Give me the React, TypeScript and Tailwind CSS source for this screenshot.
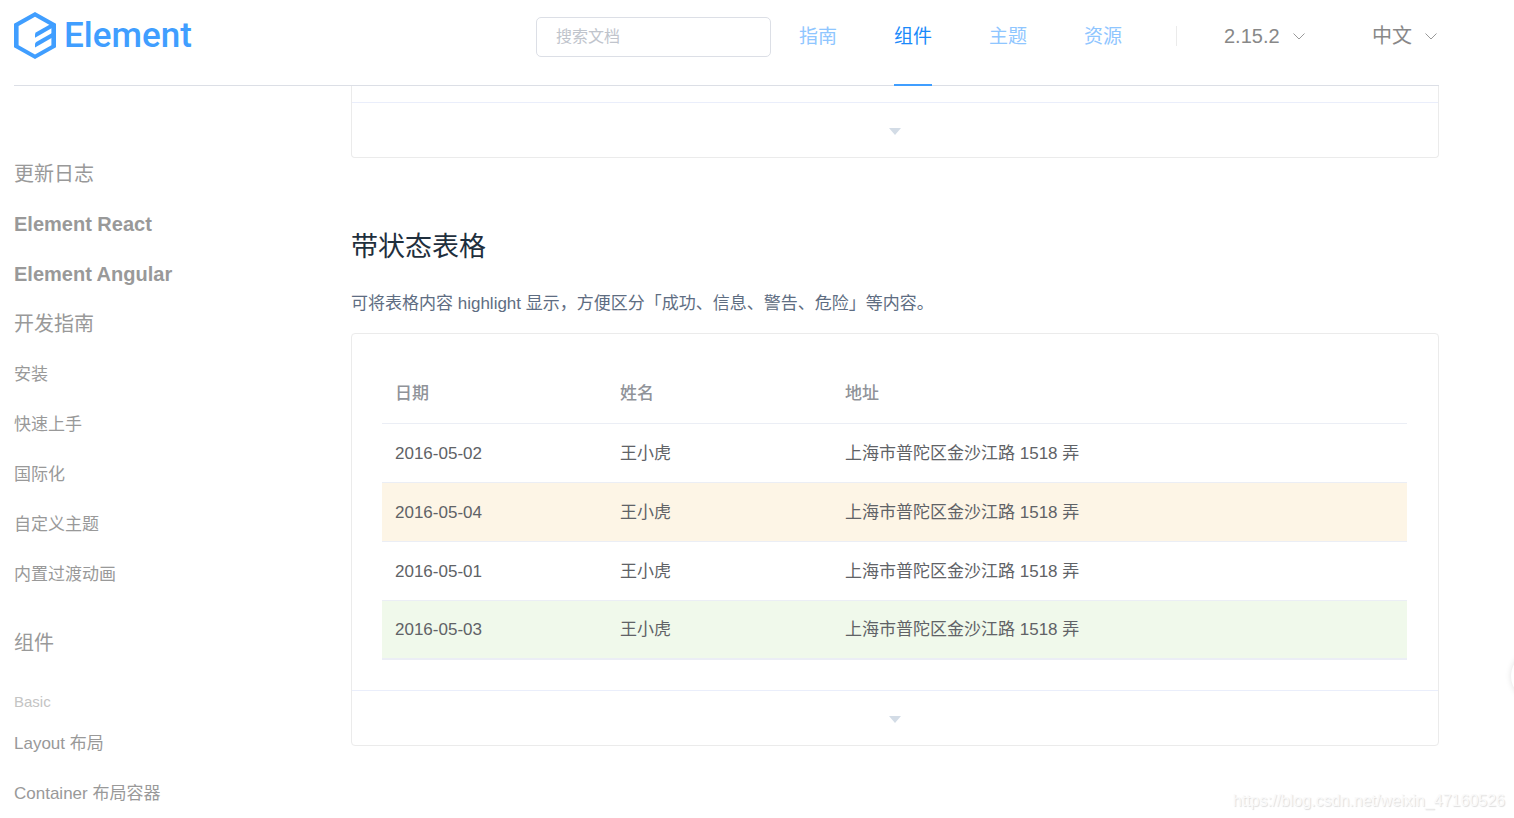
const navItems = [
  { label: "指南", active: false },
  { label: "组件", active: true },
  { label: "主题", active: false },
  { label: "资源", active: false },
];

const guideItems = ["安装", "快速上手", "国际化", "自定义主题", "内置过渡动画"];
const basicItems = ["Layout 布局", "Container 布局容器"];

const address = "上海市普陀区金沙江路 1518 弄";
const rows = [
  { date: "2016-05-02", name: "王小虎", address, tone: "" },
  { date: "2016-05-04", name: "王小虎", address, tone: "bg-[#fdf5e6]" },
  { date: "2016-05-01", name: "王小虎", address, tone: "" },
  { date: "2016-05-03", name: "王小虎", address, tone: "bg-[#f0f9eb]" },
];

const Logo = () => (
  <a href="#" className="flex items-center gap-2 text-[#409eff]">
    <svg viewBox="0 0 42 47" className="h-[47px] w-[42px]" fill="currentColor">
      <path
        fillRule="evenodd"
        d="M21 0L42 11.7V35.3L21 47L0 35.3V11.7ZM21 4.8L4.6 14V33.2L21 42.4L37.4 33.2V14Z"
      />
      <path d="M21 25.8V22.4Q21 21 22.2 20.3L38 11.2V16Z" />
      <path d="M21 35.6V32.2Q21 30.8 22.2 30.1L38 21V25.8Z" />
    </svg>
    <span className="font-[Roboto,sans-serif] text-[35px] leading-[47px] font-medium">
      Element
    </span>
  </a>
);

const HeaderSelect = ({ label, value }: { label: string; value: string }) => (
  <label className="relative flex items-center">
    <select
      aria-label={label}
      className="appearance-none bg-transparent pr-[25px] text-[20px] leading-[28px] text-[#888]"
    >
      <option>{value}</option>
    </select>
    <svg
      viewBox="0 0 12 7"
      className="pointer-events-none absolute right-0 h-[7px] w-3"
      fill="none"
      stroke="#999"
    >
      <path d="M0.5 0.5L6 6L11.5 0.5" />
    </svg>
  </label>
);

const Header = () => (
  <header className="flex h-[86px] items-start justify-between border-b border-[#dcdfe6] pt-3 pr-[2px]">
    <Logo />
    <div className="flex items-start">
      <input
        type="text"
        aria-label="搜索文档"
        placeholder="搜索文档"
        className="mt-[5px] h-10 w-[235px] rounded-[5px] border border-[#dcdfe6] px-[19px] text-[16px] placeholder:text-[#c0c4cc]"
      />
      <nav className="ml-7 flex gap-[57px]">
        {navItems.map((item) => (
          <a
            key={item.label}
            href="#"
            className={`h-[74px] text-[19px] leading-[50px] ${
              item.active
                ? "border-b-2 border-[#409eff] text-[#1989fa]"
                : "text-[#8fc6ff]"
            }`}
          >
            {item.label}
          </a>
        ))}
      </nav>
      <div className="ml-[54px] flex h-12 items-center">
        <div className="mr-[47px] h-5 w-px bg-[#ebebeb]" />
        <HeaderSelect label="版本" value="2.15.2" />
        <div className="w-[67px]" />
        <HeaderSelect label="语言" value="中文" />
      </div>
    </div>
  </header>
);

const Sidebar = () => (
  <aside className="w-[337px] shrink-0 pt-[63px] text-[17px] leading-[50px] text-[#999]">
    <ul className="text-[20px] font-bold">
      <li>
        <a href="#" className="font-normal">更新日志</a>
      </li>
      <li>
        <a href="#">Element React</a>
      </li>
      <li>
        <a href="#">Element Angular</a>
      </li>
    </ul>
    <h2 className="text-[20px]">开发指南</h2>
    <ul className="pt-px">
      {guideItems.map((item) => (
        <li key={item}>
          <a href="#">{item}</a>
        </li>
      ))}
    </ul>
    <h2 className="mt-[18px] text-[20px]">组件</h2>
    <h3 className="mt-[18px] text-[15px] leading-8 text-[#c4c4c4]">Basic</h3>
    <ul className="pt-px">
      {basicItems.map((item) => (
        <li key={item}>
          <a href="#">{item}</a>
        </li>
      ))}
    </ul>
  </aside>
);

const ExpandButton = () => (
  <button
    type="button"
    aria-label="显示代码"
    className="flex h-[55px] w-full items-center justify-center border-t border-[#eaeefb]"
  >
    <svg viewBox="0 0 12 7" className="mt-0.5 h-[7px] w-3" fill="#d3dce6">
      <path d="M0 0H12L6 7Z" />
    </svg>
  </button>
);

const StatusTable = () => (
  <table className="w-full table-fixed border-b-2 border-[#ebeef5] text-left text-[17px] leading-[28px] text-[#606266]">
    <thead>
      <tr className="h-[59px] border-b border-[#ebeef5] text-[#909399]">
        <th className="w-[225px] px-[13px] pt-0.5 font-medium">日期</th>
        <th className="w-[225px] px-[13px] pt-0.5 font-medium">姓名</th>
        <th className="px-[13px] pt-0.5 font-medium">地址</th>
      </tr>
    </thead>
    <tbody>
      {rows.map((row) => (
        <tr key={row.date} className={`h-[59px] border-b border-[#ebeef5] ${row.tone}`}>
          <td className="px-[13px] pt-0.5">{row.date}</td>
          <td className="px-[13px] pt-0.5">{row.name}</td>
          <td className="px-[13px] pt-0.5">{row.address}</td>
        </tr>
      ))}
    </tbody>
  </table>
);

const App = () => {
  return (
    <div className="relative min-h-screen overflow-hidden bg-white pr-[75px] pl-[14px] font-['Liberation_Sans','Noto_Sans_CJK_SC',sans-serif]">
      <Header />
      <div className="flex">
        <Sidebar />
        <main className="min-w-0 flex-1">
          {/* Bottom of the previous demo */}
          <section className="rounded-b-[4px] border border-t-0 border-[#ebebeb] pt-4">
            <ExpandButton />
          </section>

          <h2 className="mt-[69px] text-[27px] leading-[40px] text-[#1f2f3d]">
            带状态表格
          </h2>
          <p className="mt-[22px] text-[17px] leading-[30px] text-[#5e6d82]">
            可将表格内容 highlight 显示，方便区分「成功、信息、警告、危险」等内容。
          </p>

          <section className="mt-[14px] rounded-[4px] border border-[#ebebeb]">
            <div className="py-[30px] pr-[31px] pl-[30px]">
              <StatusTable />
            </div>
            <ExpandButton />
          </section>
        </main>
      </div>

      {/* Back to top */}
      <button
        type="button"
        aria-label="回到顶部"
        className="fixed right-[-47px] bottom-[117px] size-[50px] rounded-full bg-white shadow-[0_0_6px_rgba(0,0,0,0.12)]"
      />
      <div className="absolute right-[9px] bottom-2 text-[16px] leading-5 text-[#fafafa] [text-shadow:1px_1px_1px_#ddd]">
        https://blog.csdn.net/weixin_47160526
      </div>
    </div>
  );
};

export default App;
